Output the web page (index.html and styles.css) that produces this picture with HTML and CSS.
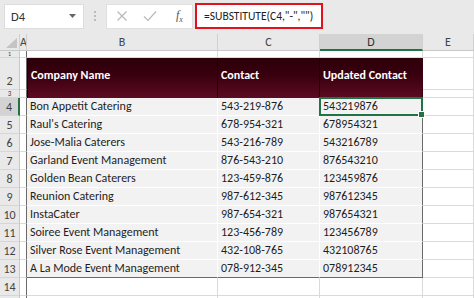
FILE: index.html
```html
<!DOCTYPE html>
<html>
<head>
<meta charset="utf-8">
<link rel="stylesheet" href="styles.css">
</head>
<body>
<div class="app">
  <div class="fbar">
    <div class="namebox"><span>D4</span><svg class="caret" width="8" height="5" viewBox="0 0 8 5"><path d="M0 0h7L3.5 4z" fill="#666"/></svg></div>
    <div class="dots"><i></i><i></i><i></i></div>
    <div class="fxbox">
      <svg width="12" height="12" viewBox="0 0 12 12"><path d="M1.5 1.5l9 9M10.5 1.5l-9 9" stroke="#b8b8b8" stroke-width="1.2" fill="none"/></svg>
      <svg width="14" height="12" viewBox="0 0 14 12"><path d="M1 6.5l4 4L13 1.5" stroke="#b8b8b8" stroke-width="1.2" fill="none"/></svg>
      <span class="fx">f<sub>x</sub></span>
    </div>
    <div class="formula">=SUBSTITUTE(C4,"-","")</div>
  </div>
  <div class="sheet">
    <div class="corner"><svg width="14" height="12" viewBox="0 0 14 12"><path d="M13 1V11H2z" fill="#c4c4c4"/></svg></div>
    <div class="ch cha">A</div>
    <div class="ch">B</div>
    <div class="ch">C</div>
    <div class="ch sel">D</div>
    <div class="ch">E</div>

    <div class="rh short">1</div><div class="c ca"></div><div class="c"></div><div class="c"></div><div class="c"></div><div class="c"></div>

    <div class="rh">2</div><div class="c ca"></div>
    <div class="th thb">Company Name</div>
    <div class="th">Contact</div>
    <div class="th thd">Updated Contact</div>
    <div class="c"></div>
    <div class="rh short3">3</div><div class="c ca"></div><div class="c"></div>

    <div class="rh rsel">4</div><div class="c ca"></div><div class="d db">Bon Appetit Catering</div><div class="d">543-219-876</div><div class="d dd active">543219876</div><div class="c"></div>
    <div class="rh">5</div><div class="c ca"></div><div class="d db">Raul's Catering</div><div class="d">678-954-321</div><div class="d dd">678954321</div><div class="c"></div>
    <div class="rh">6</div><div class="c ca"></div><div class="d db">Jose-Malia Caterers</div><div class="d">543-216-789</div><div class="d dd">543216789</div><div class="c"></div>
    <div class="rh">7</div><div class="c ca"></div><div class="d db">Garland Event Management</div><div class="d">876-543-210</div><div class="d dd">876543210</div><div class="c"></div>
    <div class="rh">8</div><div class="c ca"></div><div class="d db">Golden Bean Caterers</div><div class="d">123-459-876</div><div class="d dd">123459876</div><div class="c"></div>
    <div class="rh">9</div><div class="c ca"></div><div class="d db">Reunion Catering</div><div class="d">987-612-345</div><div class="d dd">987612345</div><div class="c"></div>
    <div class="rh">10</div><div class="c ca"></div><div class="d db">InstaCater</div><div class="d">987-654-321</div><div class="d dd">987654321</div><div class="c"></div>
    <div class="rh">11</div><div class="c ca"></div><div class="d db">Soiree Event Management</div><div class="d">123-456-789</div><div class="d dd">123456789</div><div class="c"></div>
    <div class="rh">12</div><div class="c ca"></div><div class="d db">Silver Rose Event Management</div><div class="d">432-108-765</div><div class="d dd">432108765</div><div class="c"></div>
    <div class="rh">13</div><div class="c ca"></div><div class="d db dl">A La Mode Event Management</div><div class="d dl">078-912-345</div><div class="d dd dl">078912345</div><div class="c"></div>
    <div class="rh">14</div><div class="c ca"></div><div class="c"></div><div class="c"></div><div class="c"></div><div class="c"></div>
    <div class="rh"></div><div class="c ca"></div><div class="c"></div><div class="c"></div><div class="c"></div><div class="c"></div>
  </div>
</div>
</body>
</html>
```

FILE: styles.css
```css
* { box-sizing: border-box; }
html, body { margin: 0; padding: 0; }
body {
  width: 474px;
  height: 298px;
  overflow: hidden;
  background: #fff;
  font-family: Carlito, Lato, "Liberation Sans", sans-serif;
  color: #222;
}
.app { width: 474px; height: 298px; overflow: hidden; }

.fbar {
  height: 34px;
  background: #e9e9e9;
  display: flex;
  align-items: center;
  padding-left: 4px;
  padding-bottom: 2px;
}
.namebox {
  width: 80px;
  height: 25px;
  background: #fff;
  border: 1px solid #dcdcdc;
  display: flex;
  align-items: center;
  justify-content: space-between;
  padding: 0 6px 0 6px;
  font-size: 12.5px;
  color: #333;
}
.dots {
  width: 22px;
  display: flex;
  flex-direction: column;
  align-items: center;
  gap: 2px;
}
.dots i { display: block; width: 2px; height: 2px; background: #bdbdbd; }
.fxbox {
  width: 87px;
  height: 25px;
  background: #fff;
  border: 1px solid #e0e0e0;
  display: flex;
  align-items: center;
  padding-left: 9px;
  gap: 15px;
}
.fx {
  font-family: "Liberation Serif", serif;
  font-style: italic;
  font-size: 12px;
  color: #555;
  margin-left: 4px;
}
.fx sub { font-size: 8px; }
.formula {
  margin-left: 2px;
  width: 128px;
  height: 26px;
  background: #fff;
  border: 2px solid #e0121e;
  font-size: 11.5px;
  color: #222;
  display: flex;
  align-items: center;
  padding-left: 7px;
  white-space: nowrap;
  overflow: hidden;
}

.sheet {
  display: grid;
  grid-template-columns: 20px 7px 191px 102px 103px 51px;
  grid-template-rows: 17px 7px 32px 8px repeat(12, 18px);
  font-size: 12px;
}
.corner {
  background: #e9e9e9;
  border-right: 1px solid #d0d0d0;
  border-bottom: 1px solid #c8c8c8;
  display: flex;
  align-items: flex-end;
  justify-content: flex-end;
  padding: 0 1px 1px 0;
}
.ch {
  background: #e9e9e9;
  border-right: 1px solid #d0d0d0;
  border-bottom: 1px solid #c8c8c8;
  display: flex;
  align-items: center;
  justify-content: center;
  color: #444;
  font-size: 12px;
}
.cha { justify-content: flex-start; padding-left: 0; overflow: hidden; }
.ch.sel {
  background: #d3d3d3;
  border-bottom: 2px solid #217346;
  color: #333;
}
.rh {
  background: #e9e9e9;
  border-right: 1px solid #c8c8c8;
  border-bottom: 1px solid #d6d6d6;
  display: flex;
  align-items: flex-end;
  justify-content: center;
  color: #444;
  font-size: 12px;
  line-height: 16px;
  overflow: hidden;
}
.rh.short { font-size: 6px; line-height: 6px; align-items: center; }
.rh.short3 { font-size: 7px; line-height: 7px; align-items: center; }
.rh.rsel {
  background: #d3d3d3;
  border-right: 2px solid #217346;
}
.c {
  border-right: 1px solid #dadada;
  border-bottom: 1px solid #dadada;
}
.c.ca { border-right: 1px solid #6a6a6a; }

.th {
  grid-row: span 2;
  background: linear-gradient(#2c0009, #3a0010 45%, #5c0b22);
  color: #fff;
  font-weight: bold;
  display: flex;
  align-items: center;
  padding: 0 0 6px 3px;
  border-right: 1px solid #1e0006;
}
.th.thb { border-left: 1px solid #1e0006; }
.th.thd { padding-left: 3px; border-right: 1px solid #3a0010; }

.d {
  background: #f2f2f2;
  border-right: 1px solid #fff;
  border-bottom: 1px solid #fff;
  display: flex;
  align-items: flex-end;
  padding: 0 0 1px 3px;
  line-height: 16px;
  white-space: nowrap;
  color: #1e1e1e;
}
.d.dd { border-right: 1px solid #6a6a6a; }
.d.dl { border-bottom: 1px solid #6a6a6a; }

.active { position: relative; }
.active::before {
  content: "";
  position: absolute;
  left: -1px;
  top: -1px;
  right: -1px;
  bottom: -1px;
  border: 2px solid #217346;
}
.active::after {
  content: "";
  position: absolute;
  right: -3px;
  bottom: -3px;
  width: 5px;
  height: 5px;
  background: #217346;
  border: 1px solid #fff;
}
```
